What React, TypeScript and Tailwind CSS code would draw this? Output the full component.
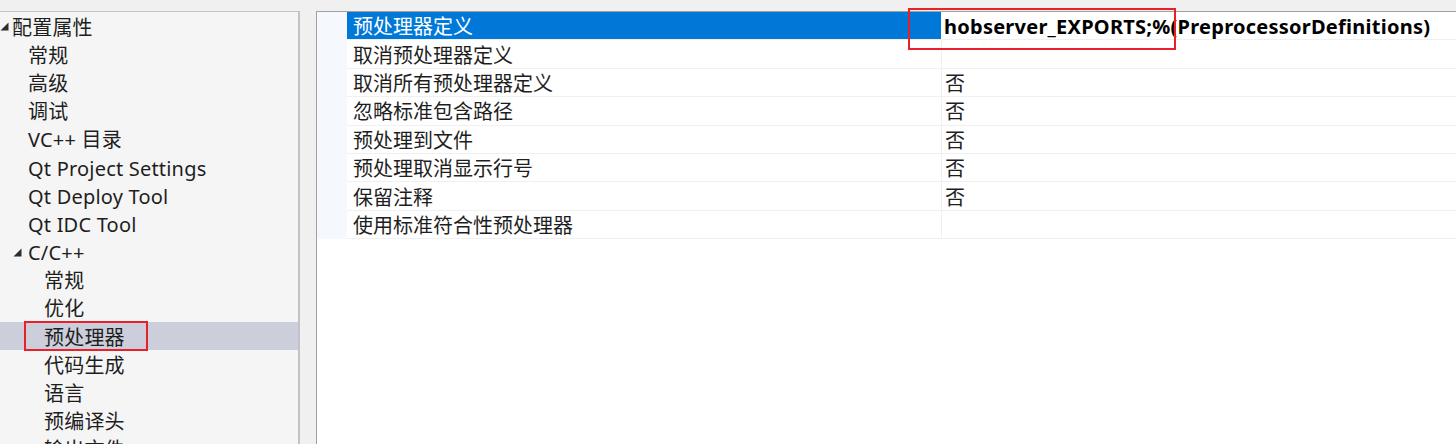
import React from 'react';

const font = { fontFamily: '"Noto Sans", "Noto Sans CJK SC", sans-serif' };

type TreeItem = { label: string; level: number; expanded?: boolean; selected?: boolean };

const tree: TreeItem[] = [
    { label: '配置属性', level: 0, expanded: true },
    { label: '常规', level: 1 },
    { label: '高级', level: 1 },
    { label: '调试', level: 1 },
    { label: 'VC++ 目录', level: 1 },
    { label: 'Qt Project Settings', level: 1 },
    { label: 'Qt Deploy Tool', level: 1 },
    { label: 'Qt IDC Tool', level: 1 },
    { label: 'C/C++', level: 1, expanded: true },
    { label: '常规', level: 2 },
    { label: '优化', level: 2 },
    { label: '预处理器', level: 2, selected: true },
    { label: '代码生成', level: 2 },
    { label: '语言', level: 2 },
    { label: '预编译头', level: 2 },
    { label: '输出文件', level: 2 },
];

const props: { name: string; value: string }[] = [
    { name: '预处理器定义', value: 'hobserver_EXPORTS;%(PreprocessorDefinitions)' },
    { name: '取消预处理器定义', value: '' },
    { name: '取消所有预处理器定义', value: '否' },
    { name: '忽略标准包含路径', value: '否' },
    { name: '预处理到文件', value: '否' },
    { name: '预处理取消显示行号', value: '否' },
    { name: '保留注释', value: '否' },
    { name: '使用标准符合性预处理器', value: '' },
];

function Arrow() {
    return (
        <svg width="9" height="9" viewBox="0 0 9 9" className="shrink-0">
            <polygon points="8.5,0.5 8.5,8.5 0.5,8.5" fill="#2d2d2d" />
        </svg>
    );
}

function TreeRow({ item }: { item: TreeItem }) {
    const indent = item.level === 0 ? 'pl-0' : item.level === 1 ? 'pl-[13px]' : 'pl-[44px]';
    return (
        <div
            className={`relative flex items-center h-[28.2px] pt-[3px] text-[20px] text-[#1e1e1e] whitespace-nowrap tracking-[0.2px] ${
                item.selected ? 'bg-[#cccedb]' : ''
            } ${item.expanded ? indent : item.level === 1 ? 'pl-[28px]' : indent}`}
        >
            {item.expanded && (
                <span className="w-[15px] flex items-center -mt-[2px]">
                    <Arrow />
                </span>
            )}
            <span className={item.expanded && item.level === 0 ? '-ml-[3px]' : ''}>{item.label}</span>
            {item.selected && (
                <div className="absolute left-[24px] top-[-1px] w-[124px] h-[30px] border-2 border-[#e8202a]" />
            )}
        </div>
    );
}

export default function App() {
    return (
        <div className="relative w-[1456px] h-[444px] bg-[#f0f0f0] overflow-hidden flex pt-[11px]" style={font}>
            {/* left tree */}
            <div className="w-[300px] shrink-0 bg-[#f5f5f5] border-t border-r-2 border-[#c2c3c9]">
                {tree.map((item, i) => (
                    <TreeRow key={i} item={item} />
                ))}
            </div>

            {/* property grid */}
            <div className="ml-[16px] flex-1 bg-white border-t border-l border-[#a0a0a0]">
                <div className="flex">
                    <div className="w-[30px] shrink-0 bg-[#f5f8fc]" />
                    <div className="flex-1">
                        {props.map((p, i) => (
                            <div key={i} className="flex h-[28.4px] border-b border-[#f0f0f0] text-[20px] text-[#1e1e1e]">
                                <div
                                    className={`w-[594px] shrink-0 flex items-center pt-[3px] pl-[6px] whitespace-nowrap ${
                                        i === 0 ? 'bg-[#0078d7] text-white' : ''
                                    }`}
                                >
                                    {p.name}
                                </div>
                                <div
                                    className={`flex-1 flex items-center pt-[3px] pl-[3px] whitespace-nowrap ${
                                        i === 0 ? 'font-bold text-black tracking-[0.25px]' : 'border-l border-[#f0f0f0]'
                                    }`}
                                >
                                    {p.value}
                                </div>
                            </div>
                        ))}
                    </div>
                </div>
            </div>

            {/* annotation */}
            <div className="absolute left-[908px] top-[8px] w-[268px] h-[42px] border-2 border-[#e8202a]" />
        </div>
    );
}
